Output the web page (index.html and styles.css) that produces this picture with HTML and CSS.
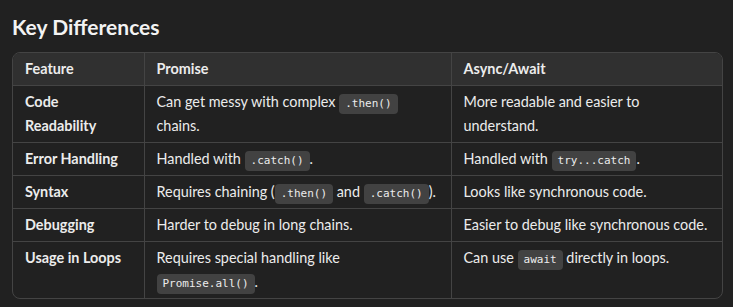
FILE: index.html
```html
<!DOCTYPE html>
<html>
<head>
<meta charset="utf-8">
<link rel="stylesheet" href="styles.css">
</head>
<body>
<h2 class="title">Key Differences</h2>
<div class="table-wrap">
<table class="diff">
<colgroup><col class="c1"><col class="c2"><col class="c3"></colgroup>
<thead>
<tr><th>Feature</th><th>Promise</th><th>Async/Await</th></tr>
</thead>
<tbody>
<tr><td class="feat">Code Readability</td><td>Can get messy with complex <code>.then()</code> chains.</td><td>More readable and easier to understand.</td></tr>
<tr><td class="feat">Error Handling</td><td>Handled with <code>.catch()</code>.</td><td>Handled with <code>try...catch</code>.</td></tr>
<tr><td class="feat">Syntax</td><td>Requires chaining (<code>.then()</code> and <code>.catch()</code>).</td><td>Looks like synchronous code.</td></tr>
<tr><td class="feat">Debugging</td><td>Harder to debug in long chains.</td><td>Easier to debug like synchronous code.</td></tr>
<tr><td class="feat">Usage in Loops</td><td>Requires special handling like <code>Promise.all()</code>.</td><td>Can use <code>await</code> directly in loops.</td></tr>
</tbody>
</table>
</div>
</body>
</html>
```
FILE: styles.css
```css
html, body {
  background: #212121;
}
body {
  margin: 0;
  padding: 13px 10px 0 12px;
  color: #ececec;
  font-family: "Lato", "Noto Sans", sans-serif;
  font-size: 14.4px;
}
.title {
  margin: 0 0 11px 0;
  font-size: 21px;
  line-height: 28px;
  font-weight: 700;
  color: #f3f3f3;
}
.table-wrap {
  border: 1px solid #444;
  border-radius: 8px;
  overflow: hidden;
  width: 711px;
  box-sizing: border-box;
}
.diff {
  width: 100%;
  border-collapse: collapse;
  table-layout: fixed;
}
.c1 { width: 131px; }
.c2 { width: 307px; }
.c3 { width: auto; }
.diff th, .diff td {
  text-align: left;
  vertical-align: top;
  padding: 4px 12px;
  line-height: 24px;
  border-left: 1px solid #444;
  border-top: 1px solid #444;
}
.diff th:first-child, .diff td:first-child { border-left: none; }
.diff thead th {
  border-top: none;
  background: #303030;
  font-weight: 700;
  color: #ececec;
}
.diff td.feat { font-weight: 700; }
.diff code {
  font-family: "DejaVu Sans Mono", "Liberation Mono", monospace;
  font-size: 11px;
  line-height: 1;
  background: #424242;
  color: #ececec;
  border-radius: 4px;
  padding: 3px 6px 4px;
}
```
